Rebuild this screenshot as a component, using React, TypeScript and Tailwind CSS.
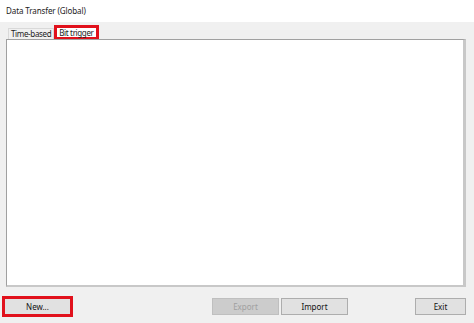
import React from 'react';

const font = { fontFamily: '"Noto Sans", "Open Sans", sans-serif' };

function WinButton({
  label,
  disabled,
  highlight,
  className,
}: {
  label: string;
  disabled?: boolean;
  highlight?: boolean;
  className?: string;
}) {
  const base = disabled
    ? 'bg-[#cccccc] border-[#bfbfbf] text-[#a0a0a0]'
    : 'bg-[#e1e1e1] border-[#adadad] text-[#111]';
  return (
    <div
      className={`h-[17px] flex items-center justify-center text-[8px] border ${base} ${
        highlight ? 'outline-[3px] outline outline-[#e1111c] -outline-offset-[1px]' : ''
      } ${className ?? ''}`}
    >
      {label}
    </div>
  );
}

export default function App() {
  return (
    <div className="w-[474px] h-[323px] bg-[#f0f0f0] flex flex-col overflow-hidden" style={font}>
      {/* Title */}
      <div className="h-[22px] bg-white flex items-center pl-[6px] text-[8px] tracking-[-0.1px] text-[#222]">
        Data Transfer (Global)
      </div>

      <div className="flex-1 flex flex-col pl-[6px] pr-[8px]">
        {/* Tabs */}
        <div className="flex items-end h-[17px] pl-[2px]">
          <div className="h-[11px] px-[2px] flex items-center text-[8px] tracking-[-0.35px] text-[#222] border border-b-0 border-[#d9d9d9] bg-[#f0f0f0]">
            Time-based
          </div>
          <div className="h-[14px] px-[2px] flex items-center text-[8px] tracking-[-0.35px] text-[#222] bg-white border-[3px] border-[#e1111c] border-b-[2px]">
            Bit trigger
          </div>
        </div>

        {/* Panel */}
        <div className="h-[248px] bg-white border-l border-t border-[#a0a0a0] border-r-[3px] border-r-[#c8c8c8] border-b-2 border-b-[#c8c8c8]" />

        {/* Buttons */}
        <div className="flex items-center mt-[11px] -ml-[2px]">
          <WinButton label="New..." highlight className="w-[67px]" />
          <div className="flex-1" />
          <WinButton label="Export" disabled className="w-[67px]" />
          <WinButton label="Import" className="w-[67px] ml-[2px]" />
          <div className="w-[67px]" />
          <WinButton label="Exit" className="w-[51px]" />
        </div>
      </div>
    </div>
  );
}
